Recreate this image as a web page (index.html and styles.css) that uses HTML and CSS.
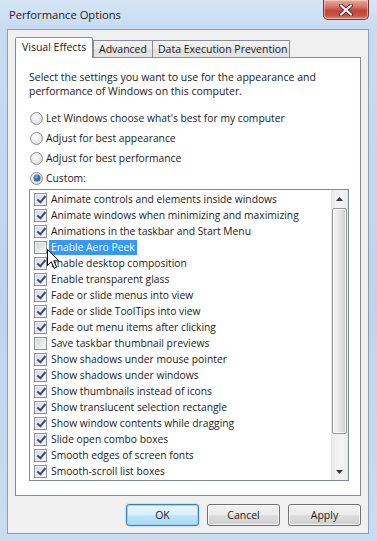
FILE: index.html
```html
<!DOCTYPE html>
<html>
<head>
<meta charset="utf-8">
<title>Performance Options</title>
<link rel="stylesheet" href="styles.css">
</head>
<body>
<div class="window">
  <div class="titlebar">
    <span class="title">Performance Options</span>
    <div class="close">
      <svg class="close-x" width="16" height="12" viewBox="0 0 16 12">
        <path d="M3 1.5 L13 10.5 M13 1.5 L3 10.5" stroke="#5a2a26" stroke-width="4" stroke-linecap="round"/>
        <path d="M3 1.5 L13 10.5 M13 1.5 L3 10.5" stroke="#ffffff" stroke-width="2.2" stroke-linecap="round"/>
      </svg>
    </div>
  </div>
  <div class="client">
    <div class="tabs">
      <div class="tab sel">Visual Effects</div>
      <div class="tab adv">Advanced</div>
      <div class="tab dep">Data Execution Prevention</div>
    </div>
    <div class="panel">
      <p class="desc">Select the settings you want to use for the appearance and<br>performance of Windows on this computer.</p>
      <div class="radios">
        <div class="ropt"><span class="radio"></span>Let Windows choose what's best for my computer</div>
        <div class="ropt"><span class="radio"></span>Adjust for best appearance</div>
        <div class="ropt"><span class="radio"></span>Adjust for best performance</div>
        <div class="ropt"><span class="radio on"></span>Custom:</div>
      </div>
      <div class="listbox">
        <ul class="items">
          <li class="item"><span class="cb on"></span><span class="lbl">Animate controls and elements inside windows</span></li>
          <li class="item"><span class="cb on"></span><span class="lbl">Animate windows when minimizing and maximizing</span></li>
          <li class="item"><span class="cb on"></span><span class="lbl">Animations in the taskbar and Start Menu</span></li>
          <li class="item"><span class="cb"></span><span class="lbl hl">Enable Aero Peek</span></li>
          <li class="item"><span class="cb on"></span><span class="lbl">Enable desktop composition</span></li>
          <li class="item"><span class="cb on"></span><span class="lbl">Enable transparent glass</span></li>
          <li class="item"><span class="cb on"></span><span class="lbl">Fade or slide menus into view</span></li>
          <li class="item"><span class="cb on"></span><span class="lbl">Fade or slide ToolTips into view</span></li>
          <li class="item"><span class="cb on"></span><span class="lbl">Fade out menu items after clicking</span></li>
          <li class="item"><span class="cb"></span><span class="lbl">Save taskbar thumbnail previews</span></li>
          <li class="item"><span class="cb on"></span><span class="lbl">Show shadows under mouse pointer</span></li>
          <li class="item"><span class="cb on"></span><span class="lbl">Show shadows under windows</span></li>
          <li class="item"><span class="cb on"></span><span class="lbl">Show thumbnails instead of icons</span></li>
          <li class="item"><span class="cb on"></span><span class="lbl">Show translucent selection rectangle</span></li>
          <li class="item"><span class="cb on"></span><span class="lbl">Show window contents while dragging</span></li>
          <li class="item"><span class="cb on"></span><span class="lbl">Slide open combo boxes</span></li>
          <li class="item"><span class="cb on"></span><span class="lbl">Smooth edges of screen fonts</span></li>
          <li class="item"><span class="cb on"></span><span class="lbl">Smooth-scroll list boxes</span></li>
        </ul>
        <div class="scrollbar">
          <div class="sb-btn"><svg width="7" height="4" viewBox="0 0 7 4"><path d="M0 4 L3.5 0 L7 4 Z" fill="#3a3a3a"/></svg></div>
          <div class="sb-track"><div class="sb-thumb"></div></div>
          <div class="sb-btn"><svg width="7" height="4" viewBox="0 0 7 4"><path d="M0 0 L7 0 L3.5 4 Z" fill="#3a3a3a"/></svg></div>
        </div>
      </div>
    </div>
    <div class="buttons">
      <div class="btn default">OK</div>
      <div class="btn">Cancel</div>
      <div class="btn">Apply</div>
    </div>
  </div>
  <svg class="cursor" width="13" height="20" viewBox="0 0 13 20">
    <path d="M0.5 0.5 L0.5 16.5 L4.3 12.8 L7.2 19.3 L9.6 18.2 L6.8 11.8 L11.8 11.8 Z" fill="#ffffff" stroke="#000000" stroke-width="1" stroke-linejoin="miter"/>
  </svg>
</div>
</body>
</html>
```

FILE: styles.css
```css
html, body {
  margin: 0;
  padding: 0;
}

body {
  font-family: "Segoe UI", "Open Sans", "Noto Sans", sans-serif;
  font-size: 10.5px;
  color: #1b1b1b;
  background: #c4d8ef;
}

.window {
  position: relative;
  width: 377px;
  height: 541px;
  box-sizing: border-box;
  display: flex;
  flex-direction: column;
  background: linear-gradient(180deg, #d6e5f5 0px, #c7dbf1 28px, #bfd4ec 55%, #c9dcf0 100%);
  overflow: hidden;
}

/* ---------- title bar ---------- */
.titlebar {
  height: 29px;
  flex: none;
  display: flex;
  justify-content: space-between;
  align-items: flex-start;
}

.title {
  margin-left: 9px;
  line-height: 30px;
  font-size: 11.2px;
  color: #1e1e1e;
}

.close {
  width: 46px;
  height: 20px;
  margin-right: 8px;
  box-sizing: border-box;
  border: 1px solid #6b3b36;
  border-top: none;
  border-radius: 0 0 5px 5px;
  background: linear-gradient(180deg, #e9a99c 0%, #d7786a 35%, #c2463a 55%, #c9503f 80%, #dc8a72 100%);
  box-shadow: inset 0 0 0 1px rgba(255, 220, 210, 0.55);
  display: flex;
  align-items: center;
  justify-content: center;
}

.close-x {
  margin-top: 1px;
}

/* ---------- client ---------- */
.client {
  flex: 1;
  margin: 0 8px 7px 7px;
  border: 1px solid #8d9db2;
  background: #f0f0f0;
  padding: 7px 7px 7px 7px;
  display: flex;
  flex-direction: column;
}

.tabs {
  display: flex;
  align-items: flex-end;
  height: 21px;
  margin-bottom: -1px;
  position: relative;
  z-index: 1;
}

.tab {
  box-sizing: border-box;
  height: 17px;
  margin-bottom: 1px;
  border: 1px solid #898c95;
  border-bottom: none;
  background: linear-gradient(180deg, #f3f3f3 0%, #ebebeb 50%, #dedede 51%, #e5e5e5 100%);
  line-height: 17px;
  padding-left: 5px;
  white-space: nowrap;
  color: #1b1b1b;
}

.tab.sel {
  width: 78px;
  height: 21px;
  margin-bottom: 0;
  background: #ffffff;
  padding-left: 6px;
  line-height: 19px;
  border-radius: 2px 2px 0 0;
}

.tab.adv {
  width: 60px;
  margin-left: 0;
}

.tab.dep {
  width: 138px;
  margin-left: -1px;
}

.panel {
  box-sizing: border-box;
  height: 439px;
  flex: none;
  border: 1px solid #898c95;
  background: #ffffff;
  padding: 12px 0 0 13px;
}

.desc {
  margin: 0;
  line-height: 14px;
}

.radios {
  margin-top: 10px;
  font-size: 10.3px;
}

.ropt {
  height: 20px;
  display: flex;
  align-items: center;
  padding-left: 1px;
}

.radio {
  width: 13px;
  height: 13px;
  box-sizing: border-box;
  border-radius: 50%;
  border: 1px solid #8e8f8f;
  background: radial-gradient(circle at 40% 35%, #ffffff 0%, #eeeeee 40%, #cfcfcf 100%);
  margin-right: 3px;
  flex: none;
  position: relative;
}

.radio.on::after {
  content: "";
  position: absolute;
  left: 2.5px;
  top: 2.5px;
  width: 6px;
  height: 6px;
  border-radius: 50%;
  background: radial-gradient(circle at 40% 35%, #7fc0ee 0%, #2a6fab 45%, #0f3f70 100%);
  box-shadow: 0 0 0 0.5px #174f86;
}

/* ---------- list box ---------- */
.listbox {
  margin-top: 1px;
  width: 320px;
  height: 292px;
  box-sizing: border-box;
  border: 1px solid #828790;
  background: #ffffff;
  display: flex;
  font-size: 10.3px;
}

.items {
  list-style: none;
  margin: 0;
  padding: 1px 0 0 0;
  flex: 1;
}

.item {
  height: 16px;
  display: flex;
  align-items: center;
  padding-left: 4px;
  white-space: nowrap;
}

.cb {
  width: 13px;
  height: 13px;
  box-sizing: border-box;
  border: 1px solid #8e8f8f;
  background: linear-gradient(135deg, #cfd1d4 0%, #e6e7e8 55%, #fafafa 100%);
  box-shadow: inset 0 0 0 1px #f4f4f4;
  flex: none;
  position: relative;
}

.cb.on::after {
  content: "";
  position: absolute;
  left: 3.5px;
  top: 0.5px;
  width: 3px;
  height: 7px;
  border: solid #3b4d86;
  border-width: 0 2px 2px 0;
  transform: rotate(40deg);
}

.lbl {
  margin-left: 2px;
  padding: 0 2px;
  line-height: 15px;
  height: 15px;
}

.lbl.hl {
  background: #3399ff;
  color: #ffffff;
}

.scrollbar {
  width: 17px;
  flex: none;
  display: flex;
  flex-direction: column;
  background: linear-gradient(90deg, #e3e3e3 0%, #f1f1f1 25%, #f3f3f3 70%, #e9e9e9 100%);
}

.sb-btn {
  height: 17px;
  flex: none;
  display: flex;
  align-items: center;
  justify-content: center;
}

.sb-track {
  flex: 1;
  padding-top: 1px;
}

.sb-thumb {
  height: 226px;
  margin: 0 0 0 1px;
  width: 15px;
  box-sizing: border-box;
  border: 1px solid #9a9a9a;
  border-radius: 2px;
  background: linear-gradient(90deg, #f6f6f6 0%, #eaeaea 40%, #d9d9d9 75%, #cdcdcd 100%);
  box-shadow: inset 0 0 0 1px rgba(255, 255, 255, 0.7);
}

/* ---------- buttons ---------- */
.buttons {
  margin-top: 8px;
  display: flex;
  justify-content: flex-end;
  gap: 8px;
}

.btn {
  width: 73px;
  height: 22px;
  box-sizing: border-box;
  border: 1px solid #707070;
  border-radius: 3px;
  background: linear-gradient(180deg, #f2f2f2 0%, #ebebeb 48%, #dddddd 52%, #cfcfcf 100%);
  box-shadow: inset 0 0 0 1px rgba(255, 255, 255, 0.75);
  text-align: center;
  line-height: 20px;
  color: #1b1b1b;
}

.btn.default {
  border-color: #3c7fb1;
  background: linear-gradient(180deg, #eaf6fd 0%, #d9f0fc 48%, #bee6fd 52%, #a7d9f5 100%);
  box-shadow: inset 0 0 0 1px #9ad6f5, 0 0 2px rgba(80, 160, 220, 0.6);
}

/* ---------- mouse pointer overlay ---------- */
.cursor {
  position: absolute;
  left: 47px;
  top: 249px;
}
```
